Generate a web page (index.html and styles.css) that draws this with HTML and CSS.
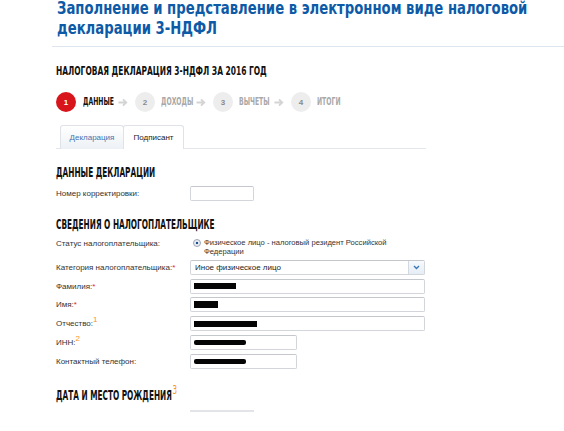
FILE: index.html
```html
<!DOCTYPE html>
<html lang="ru">
<head>
<meta charset="utf-8">
<title>3-НДФЛ</title>
<link rel="stylesheet" href="styles.css">
</head>
<body>
<div class="page">
  <h1 class="title"><span class="cond t-title">Заполнение и представление в электронном виде налоговой<br>декларации 3-НДФЛ</span></h1>
  <div class="rule"></div>
  <div class="content">
    <h2 class="doc-title"><span class="cond t-doc">НАЛОГОВАЯ ДЕКЛАРАЦИЯ 3-НДФЛ ЗА 2016 ГОД</span></h2>
    <div class="steps">
      <div class="step active"><span class="num">1</span><span class="slabel"><span class="cond t-step">ДАННЫЕ</span></span></div>
      <svg class="arrow" width="10" height="9" viewBox="0 0 10 9"><path d="M0.5 4.5 H8 M5 1.3 L8.3 4.5 L5 7.7" fill="none" stroke="#d4d4d4" stroke-width="1.8"/></svg>
      <div class="step"><span class="num">2</span><span class="slabel"><span class="cond t-step">ДОХОДЫ</span></span></div>
      <svg class="arrow" width="10" height="9" viewBox="0 0 10 9"><path d="M0.5 4.5 H8 M5 1.3 L8.3 4.5 L5 7.7" fill="none" stroke="#d4d4d4" stroke-width="1.8"/></svg>
      <div class="step"><span class="num">3</span><span class="slabel"><span class="cond t-step">ВЫЧЕТЫ</span></span></div>
      <svg class="arrow" width="10" height="9" viewBox="0 0 10 9"><path d="M0.5 4.5 H8 M5 1.3 L8.3 4.5 L5 7.7" fill="none" stroke="#d4d4d4" stroke-width="1.8"/></svg>
      <div class="step"><span class="num">4</span><span class="slabel"><span class="cond t-step">ИТОГИ</span></span></div>
    </div>
    <div class="tabs">
      <div class="tab current">Декларация</div>
      <div class="tab second">Подписант</div>
    </div>

    <h3 class="section first"><span class="cond t-sec">ДАННЫЕ ДЕКЛАРАЦИИ</span></h3>
    <div class="row">
      <div class="label">Номер корректировки:</div>
      <div class="box short"></div>
    </div>

    <h3 class="section"><span class="cond t-sec">СВЕДЕНИЯ О НАЛОГОПЛАТЕЛЬЩИКЕ</span></h3>
    <div class="row status">
      <div class="label">Статус налогоплательщика:</div>
      <div class="radio-line"><span class="radio"></span><span class="radio-text">Физическое лицо - налоговый резидент Российской Федерации</span></div>
    </div>
    <div class="row">
      <div class="label">Категория налогоплательщика:<span class="req">*</span></div>
      <div class="box select"><span class="val">Иное физическое лицо</span><span class="sel-btn"><svg width="7" height="5" viewBox="0 0 7 5"><path d="M1 1 L3.5 3.5 L6 1" fill="none" stroke="#3a78b8" stroke-width="1.4"/></svg></span></div>
    </div>
    <div class="row">
      <div class="label">Фамилия:<span class="req">*</span></div>
      <div class="box"><span class="mask" style="width:42px"></span></div>
    </div>
    <div class="row">
      <div class="label">Имя:<span class="req">*</span></div>
      <div class="box"><span class="mask tall" style="width:24px"></span></div>
    </div>
    <div class="row">
      <div class="label">Отчество:<sup class="note">1</sup></div>
      <div class="box"><span class="mask" style="width:63px"></span></div>
    </div>
    <div class="row">
      <div class="label">ИНН:<sup class="note">2</sup></div>
      <div class="box mid"><span class="mask thin" style="width:52px"></span></div>
    </div>
    <div class="row">
      <div class="label">Контактный телефон:</div>
      <div class="box mid"><span class="mask thin" style="width:52px"></span></div>
    </div>

    <h3 class="section birth"><span class="cond t-sec">ДАТА И МЕСТО РОЖДЕНИЯ<sup class="note big">3</sup></span></h3>
    <div class="stub"></div>
  </div>
</div>
</body>
</html>
```
FILE: styles.css
```css
html, body {
  margin: 0;
  padding: 0;
  background: #ffffff;
}
body {
  font-family: "Liberation Sans", Arial, sans-serif;
  color: #333;
  overflow: hidden;
}
.page {
  width: 564px;
  height: 431px;
  overflow: hidden;
}
.cond {
  display: inline-block;
  font-family: "DejaVu Sans Condensed", "DejaVu Sans", sans-serif;
  font-weight: bold;
  white-space: nowrap;
  transform-origin: 0 50%;
}
.title {
  margin: -2px 0 0 57px;
  font-size: 18px;
  line-height: 20px;
  color: #0d5aa7;
  height: 40px;
}
.t-title {
  transform: scaleX(0.816);
  transform-origin: 0 0;
}
.rule {
  margin: 8px 0 0 52px;
  height: 1px;
  background: #dde5ee;
}
.content {
  padding-left: 56px;
  width: 370px;
}
.doc-title {
  margin: 17px 0 0;
  font-size: 12px;
  line-height: 14px;
  color: #111;
}
.t-doc {
  transform: scaleX(0.693);
}
.steps {
  display: flex;
  align-items: center;
  margin-top: 14px;
  height: 20px;
}
.step {
  display: flex;
  align-items: center;
}
.num {
  width: 20px;
  height: 20px;
  border-radius: 50%;
  background: #ededed;
  color: #8a8a8a;
  font-size: 8px;
  font-weight: bold;
  display: flex;
  align-items: center;
  justify-content: center;
}
.step.active .num {
  background: #d8151b;
  color: #fff;
}
.slabel {
  margin-left: 6px;
  width: 30px;
  font-size: 10px;
  line-height: 12px;
  color: #a8a8a8;
  white-space: nowrap;
}
.step:first-child .slabel {
  margin-left: 7px;
}
.step:last-child .slabel {
  width: 22px;
}
.t-step {
  transform: scaleX(0.68);
}
.step.active .slabel {
  color: #111;
}
.arrow {
  display: block;
  margin: 0 7px 0 5px;
}
.tabs {
  display: flex;
  margin-top: 13px;
  padding-left: 4px;
  border-bottom: 1px solid #e3e6ea;
  height: 23px;
  align-items: flex-end;
}
.tab {
  height: 24px;
  box-sizing: border-box;
  border: 1px solid #dfe3e8;
  border-bottom: none;
  border-radius: 3px 3px 0 0;
  font-size: 8px;
  line-height: 24px;
  color: #222;
  background: #fff;
  margin-bottom: -1px;
  text-align: center;
}
.tab.current {
  background: linear-gradient(#ffffff, #edf1f5);
  color: #4473b0;
  width: 64px;
}
.tab.second {
  margin-left: -1px;
  width: 61px;
}
.section {
  margin: 15px 0 0;
  font-size: 13.5px;
  line-height: 16px;
  height: 16px;
  color: #111;
}
.t-sec {
  transform: scaleX(0.605);
}
.section.first {
  margin-top: 15px;
}
.section.birth {
  margin-top: 18px;
}
.row {
  display: grid;
  grid-template-columns: 134px 1fr;
  align-items: center;
  min-height: 15px;
  margin-top: 3.8px;
}
.section + .row {
  margin-top: 6px;
}
.label {
  color: #333;
  font-size: 8px;
  white-space: nowrap;
}
.req {
  color: #e2232a;
}
.note {
  color: #f7941d;
  font-size: 8px;
  line-height: 0;
  vertical-align: 4px;
}
.note.big {
  font-size: 13px;
  vertical-align: 6px;
  font-weight: normal;
  margin-left: 1px;
}
.box {
  width: 235px;
  height: 15px;
  box-sizing: border-box;
  border: 1px solid #d2d6db;
  border-top-color: #c4c8cd;
  border-radius: 2px;
  background: #fff;
  display: flex;
  align-items: center;
  padding-left: 3px;
}
.box.short {
  width: 64px;
}
.box.mid {
  width: 107px;
}
.mask {
  display: block;
  height: 6px;
  background: #050505;
}
.mask.tall {
  height: 7px;
}
.mask.thin {
  height: 5px;
  border-radius: 2px;
}
.status {
  align-items: start;
  margin-top: 6px;
  margin-bottom: 2px;
}
.status .label {
  padding-top: 1px;
}
.radio-line {
  display: flex;
  align-items: flex-start;
  padding-left: 3px;
}
.radio {
  flex: none;
  width: 6px;
  height: 6px;
  border-radius: 50%;
  border: 1px solid #9aa6b4;
  background: radial-gradient(circle, #1d4f8f 0 1.3px, #e9eef4 1.6px);
  margin-top: 1px;
}
.radio-text {
  margin-left: 3px;
  font-size: 7.6px;
  line-height: 9px;
  color: #333;
  width: 190px;
}
.select {
  position: relative;
  padding-left: 4px;
  color: #222;
}
.select .val {
  font-size: 8px;
}
.sel-btn {
  position: absolute;
  right: 0;
  top: 0;
  bottom: 0;
  width: 15px;
  border-left: 1px solid #d3d9e0;
  background: linear-gradient(#f7fafd, #e6edf5);
  display: flex;
  align-items: center;
  justify-content: center;
}
.stub {
  width: 64px;
  height: 2px;
  background: #e2e4e7;
  margin: 7px 0 0 134px;
}
```
